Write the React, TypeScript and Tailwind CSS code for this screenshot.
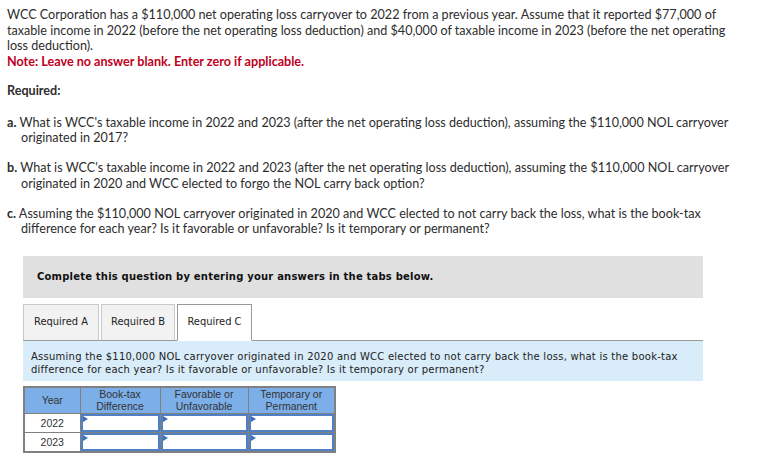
const SANS = "font-['Lato','Liberation_Sans',sans-serif]";

const ROWS = ["2022", "2023"];

function InputCell() {
  return (
    <td className="h-[18px] border border-[#808080] p-0">
      <div className="relative h-[18px] border-2 border-[#4f80c4] bg-white">
        <span className="absolute left-0 top-0 h-0 w-0 border-y-[3px] border-l-[5px] border-y-transparent border-l-[#3d6fc2]" />
      </div>
    </td>
  );
}

export default function App() {
  return (
    <div className="min-h-[458px] bg-white pt-[7px] text-[#2d2d2d]">
      <div className={`${SANS} w-[742px] pl-[7px] text-[12.6px] leading-[15.5px]`}>
        <p>
          WCC Corporation has a $110,000 net operating loss carryover to 2022 from a previous year. Assume that it
          reported $77,000 of taxable income in 2022 (before the net operating loss deduction) and $40,000 of taxable
          income in 2023 (before the net operating loss deduction).
        </p>
        <p className="font-bold text-[#c0001e]">Note: Leave no answer blank. Enter zero if applicable.</p>

        <p className="mt-[14px] font-bold">Required:</p>

        <p className="mt-[16px] pl-[14px] -indent-[14px]">
          <span className="font-bold">a.</span> What is WCC's taxable income in 2022 and 2023 (after the net operating
          loss deduction), assuming the $110,000 NOL carryover originated in 2017?
        </p>
        <p className="mt-[14.5px] pl-[14px] -indent-[14px]">
          <span className="font-bold">b.</span> What is WCC's taxable income in 2022 and 2023 (after the net operating
          loss deduction), assuming the $110,000 NOL carryover originated in 2020 and WCC elected to forgo the NOL
          carry back option?
        </p>
        <p className="mt-[14.5px] pl-[14px] -indent-[14px]">
          <span className="font-bold">c.</span> Assuming the $110,000 NOL carryover originated in 2020 and WCC elected
          to not carry back the loss, what is the book-tax difference for each year? Is it favorable or unfavorable? Is
          it temporary or permanent?
        </p>
      </div>

      <div className="ml-[23px] mt-[19px] w-[680px]">
        <div className="flex h-[42px] items-center bg-[#e0e0e0] pl-[14px] font-['DejaVu_Sans',sans-serif] text-[10px] font-bold tracking-[0.2px] text-[#111]">
          Complete this question by entering your answers in the tabs below.
        </div>

        <div className="mt-[6px] flex gap-[2px] border-b border-[#999] font-['DejaVu_Sans',sans-serif] text-[11px] font-stretch-condensed text-[#222]">
          <div className="-mb-px flex h-[37px] w-[76px] items-center justify-center border border-b-[#999] border-[#c8c8c8] bg-[#f2f2f2]">
            Required A
          </div>
          <div className="-mb-px flex h-[37px] w-[74px] items-center justify-center border border-b-[#999] border-[#c8c8c8] bg-[#f2f2f2]">
            Required B
          </div>
          <div className="-mb-px flex h-[37px] w-[75px] items-center justify-center border border-[#999] border-b-white bg-white">
            Required C
          </div>
        </div>

        <div className="bg-[#d9ecf9] px-[8px] pb-[5px] pt-[9px] font-['DejaVu_Sans',sans-serif] text-[10px] leading-[13px] tracking-[0.24px] text-[#222]">
          Assuming the $110,000 NOL carryover originated in 2020 and WCC elected to not carry back the loss, what is the
          book-tax difference for each year? Is it favorable or unfavorable? Is it temporary or permanent?
        </div>

        <table className="mt-[5px] border-collapse border-2 border-[#808080] font-['Liberation_Sans',sans-serif] text-[10.5px] leading-[12px] text-[#333]">
          <thead>
            <tr className="h-[27px] bg-[#7caee8]">
              <th className="w-[56px] border border-[#808080] font-normal">Year</th>
              <th className="w-[80px] border border-[#808080] font-normal">
                Book-tax
                <br />
                Difference
              </th>
              <th className="w-[88px] border border-[#808080] font-normal">
                Favorable or
                <br />
                Unfavorable
              </th>
              <th className="w-[87px] border border-[#808080] font-normal">
                Temporary or
                <br />
                Permanent
              </th>
            </tr>
          </thead>
          <tbody>
            {ROWS.map((year) => (
              <tr key={year}>
                <td className="h-[18px] border border-[#808080] bg-white p-0 text-center">{year}</td>
                <InputCell />
                <InputCell />
                <InputCell />
              </tr>
            ))}
          </tbody>
        </table>
      </div>
    </div>
  );
}
